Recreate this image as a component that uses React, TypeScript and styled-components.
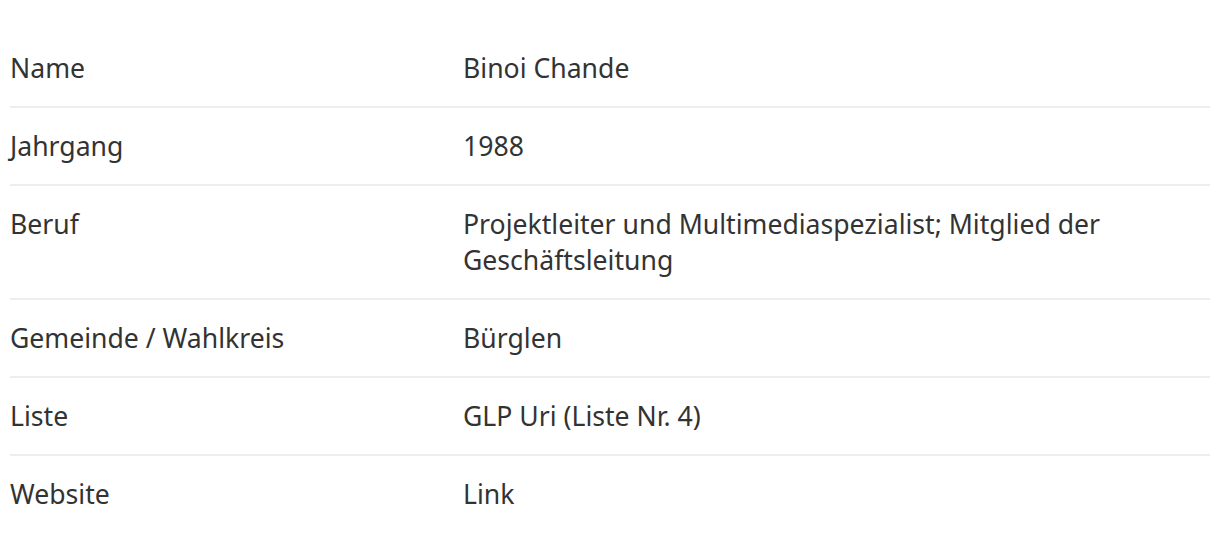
import React from "react";
import styled, { createGlobalStyle } from "styled-components";

const Global = createGlobalStyle`
  html, body { margin: 0; padding: 0; background: #fff; }
  body { font-family: "Noto Sans", "Open Sans", sans-serif; color: #333; }
`;

const Wrapper = styled.div`
  padding: 30px 10px 0 10px;
`;

const Table = styled.dl`
  margin: 0;
  display: flex;
  flex-direction: column;
`;

const Row = styled.div<{ $last?: boolean }>`
  display: grid;
  grid-template-columns: 453px 1fr;
  padding: 20px 0;
  border-bottom: ${(p) => (p.$last ? "none" : "2px solid #eeeeee")};
`;

const Label = styled.dt`
  margin: 0;
  font-size: 26.6px;
  line-height: 36px;
`;

const Value = styled.dd`
  margin: 0;
  font-size: 26.6px;
  line-height: 36px;
  padding-right: 60px;
`;

const rows: [string, string][] = [
  ["Name", "Binoi Chande"],
  ["Jahrgang", "1988"],
  ["Beruf", "Projektleiter und Multimediaspezialist; Mitglied der Geschäftsleitung"],
  ["Gemeinde / Wahlkreis", "Bürglen"],
  ["Liste", "GLP Uri (Liste Nr. 4)"],
  ["Website", "Link"],
];

export default function App() {
  return (
    <>
      <Global />
      <Wrapper>
        <Table>
          {rows.map(([k, v], i) => (
            <Row key={k} $last={i === rows.length - 1}>
              <Label>{k}</Label>
              <Value>{v}</Value>
            </Row>
          ))}
        </Table>
      </Wrapper>
    </>
  );
}
